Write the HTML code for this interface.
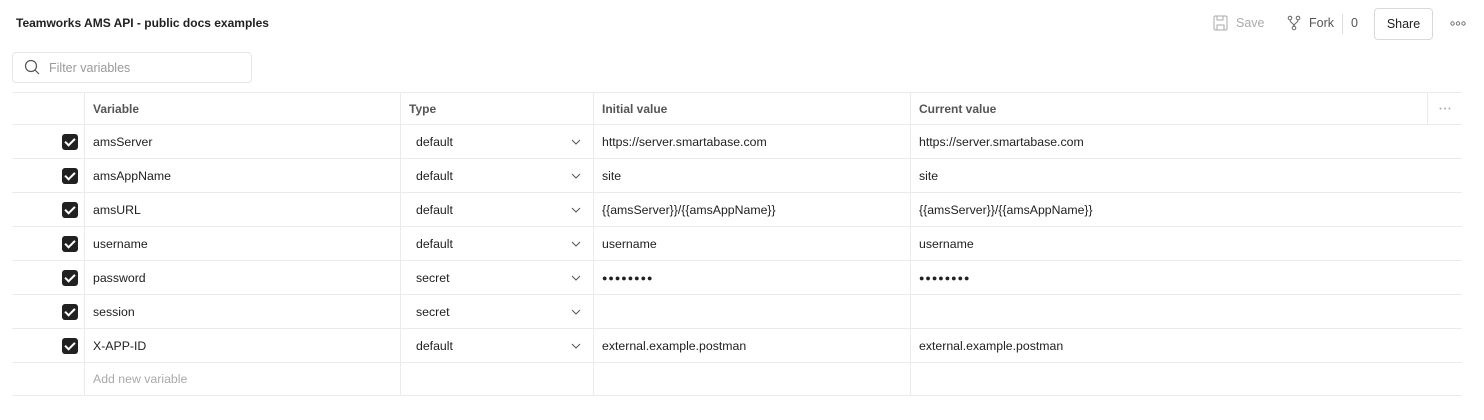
<!DOCTYPE html>
<html><head><style>
body{margin:0;width:1484px;height:420px;background:#fff;font-family:"Liberation Sans",sans-serif;font-size:12px;color:#212121;position:relative;overflow:hidden}
.a{position:absolute}
.t{position:absolute;left:16px;top:16px;font-weight:bold;font-size:12px}
.filter{left:12px;top:52px;width:240px;height:31px;border:1px solid #e6e6e6;border-radius:4px;box-sizing:border-box}
table{position:absolute;left:12px;top:92px;border-collapse:collapse;width:1450px}
tr{height:34px}
td{border-top:1px solid #ebebeb;border-bottom:1px solid #ebebeb;padding:0 8px;font-size:12.3px}
td+td{border-left:1px solid #ebebeb}
tr.h{height:32px}
tr.h td{color:#555;font-weight:bold;font-size:12px}
.cb{display:inline-block;width:16px;height:16px;background:#212121;border-radius:3px;position:relative;vertical-align:middle}
.cb:after{content:"";position:absolute;left:5px;top:2px;width:4px;height:8px;border:solid #fff;border-width:0 2px 2px 0;transform:rotate(45deg)}
.ty{position:relative;padding-left:15px}
.ty svg{position:absolute;right:12px;top:14px}
</style></head><body>
<div class="t">Teamworks AMS API - public docs examples</div>
<svg class="a" style="left:1213px;top:15px" width="15" height="16" viewBox="0 0 15 16" fill="none" stroke="#aaa"><rect x="1" y="1" width="13" height="14" rx="1.5"/><path d="M4 1v4h6V1M4 15v-5h7v5"/></svg>
<div class="a" style="left:1236px;top:16px;color:#aaa;font-size:12.5px">Save</div>
<svg class="a" style="left:1287px;top:15px" width="14" height="16" viewBox="0 0 14 16" fill="none" stroke="#666"><circle cx="3" cy="3" r="1.8"/><circle cx="11" cy="3" r="1.8"/><circle cx="7" cy="13" r="1.8"/><path d="M3 5c0 3 4 3 4 6M11 5c0 3-4 3-4 6"/></svg>
<div class="a" style="left:1309px;top:16px;color:#555;font-size:12.5px">Fork</div>
<div class="a" style="left:1342px;top:14px;width:1px;height:20px;background:#ddd"></div>
<div class="a" style="left:1351px;top:16px;color:#555;font-size:12.5px">0</div>
<div class="a" style="left:1374px;top:8px;width:59px;height:32px;border:1px solid #d9d9d9;border-radius:4px;box-sizing:border-box;text-align:center;line-height:30px;font-size:12.5px">Share</div>
<svg class="a" style="left:1450px;top:21px" width="16" height="5"><circle cx="2.5" cy="2.5" r="1.7" fill="none" stroke="#777"/><circle cx="8" cy="2.5" r="1.7" fill="none" stroke="#777"/><circle cx="13.5" cy="2.5" r="1.7" fill="none" stroke="#777"/></svg>
<div class="a filter"></div>
<svg class="a" style="left:24px;top:59px" width="16" height="16" viewBox="0 0 16 16" fill="none" stroke="#555" stroke-width="1.2"><circle cx="7" cy="7" r="5.5"/><path d="M11 11l4 4"/></svg>
<div class="a" style="left:49px;top:61px;color:#9a9a9a;font-size:12.5px">Filter variables</div>
<table>
<tr class="h"><td style="width:56px;border-left:none"></td><td style="width:299px">Variable</td><td style="width:176px">Type</td><td style="width:300px">Initial value</td><td style="width:500px">Current value</td><td style="text-align:center;vertical-align:middle"><svg width="12" height="3" style="display:block;margin:0 auto"><circle cx="1.5" cy="1.5" r="1" fill="#aaa"/><circle cx="6" cy="1.5" r="1" fill="#aaa"/><circle cx="10.5" cy="1.5" r="1" fill="#aaa"/></svg></td></tr>
<tr><td style="text-align:right;padding-right:6px"><span class="cb"></span></td><td>amsServer</td><td class="ty">default<svg width="10" height="6"><path d="M1 1l4 4 4-4" stroke="#555" fill="none"/></svg></td><td>https://server.smartabase.com</td><td colspan="2">https://server.smartabase.com</td></tr>
<tr><td style="text-align:right;padding-right:6px"><span class="cb"></span></td><td>amsAppName</td><td class="ty">default<svg width="10" height="6"><path d="M1 1l4 4 4-4" stroke="#555" fill="none"/></svg></td><td>site</td><td colspan="2">site</td></tr>
<tr><td style="text-align:right;padding-right:6px"><span class="cb"></span></td><td>amsURL</td><td class="ty">default<svg width="10" height="6"><path d="M1 1l4 4 4-4" stroke="#555" fill="none"/></svg></td><td>{{amsServer}}/{{amsAppName}}</td><td colspan="2">{{amsServer}}/{{amsAppName}}</td></tr>
<tr><td style="text-align:right;padding-right:6px"><span class="cb"></span></td><td>username</td><td class="ty">default<svg width="10" height="6"><path d="M1 1l4 4 4-4" stroke="#555" fill="none"/></svg></td><td>username</td><td colspan="2">username</td></tr>
<tr><td style="text-align:right;padding-right:6px"><span class="cb"></span></td><td>password</td><td class="ty">secret<svg width="10" height="6"><path d="M1 1l4 4 4-4" stroke="#555" fill="none"/></svg></td><td style="font-size:9px;letter-spacing:1px">●●●●●●●●</td><td colspan="2" style="font-size:9px;letter-spacing:1px">●●●●●●●●</td></tr>
<tr><td style="text-align:right;padding-right:6px"><span class="cb"></span></td><td>session</td><td class="ty">secret<svg width="10" height="6"><path d="M1 1l4 4 4-4" stroke="#555" fill="none"/></svg></td><td></td><td colspan="2"></td></tr>
<tr><td style="text-align:right;padding-right:6px"><span class="cb"></span></td><td>X-APP-ID</td><td class="ty">default<svg width="10" height="6"><path d="M1 1l4 4 4-4" stroke="#555" fill="none"/></svg></td><td>external.example.postman</td><td colspan="2">external.example.postman</td></tr>
<tr style="height:33px"><td></td><td style="color:#aaa">Add new variable</td><td></td><td></td><td colspan="2"></td></tr>
</table>
</body></html>
